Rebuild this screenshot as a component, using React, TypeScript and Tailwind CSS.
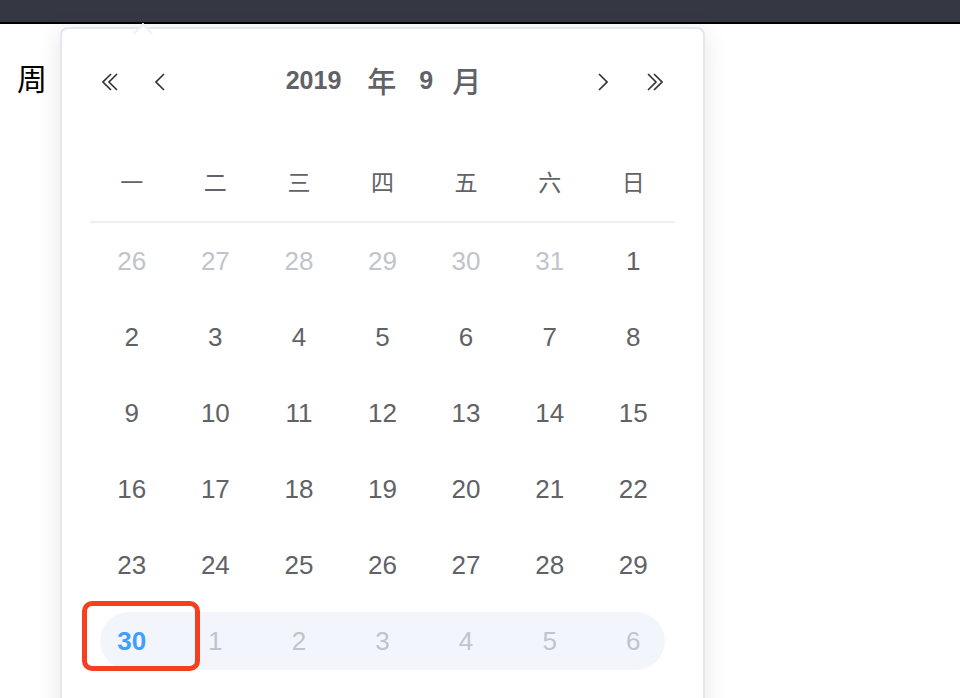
import React from 'react';

const weekdays = ['一', '二', '三', '四', '五', '六', '日'];

type Cell = { n: number; off?: boolean };

const rows: Cell[][] = [
  [{ n: 26, off: true }, { n: 27, off: true }, { n: 28, off: true }, { n: 29, off: true }, { n: 30, off: true }, { n: 31, off: true }, { n: 1 }],
  [{ n: 2 }, { n: 3 }, { n: 4 }, { n: 5 }, { n: 6 }, { n: 7 }, { n: 8 }],
  [{ n: 9 }, { n: 10 }, { n: 11 }, { n: 12 }, { n: 13 }, { n: 14 }, { n: 15 }],
  [{ n: 16 }, { n: 17 }, { n: 18 }, { n: 19 }, { n: 20 }, { n: 21 }, { n: 22 }],
  [{ n: 23 }, { n: 24 }, { n: 25 }, { n: 26 }, { n: 27 }, { n: 28 }, { n: 29 }],
];

const lastWeek = [30, 1, 2, 3, 4, 5, 6];

function Chevron({ dir, double }: { dir: 'left' | 'right'; double?: boolean }) {
  const left = dir === 'left';
  const single = (x: number) =>
    left ? `M${x + 8} 1 L${x} 9 L${x + 8} 17` : `M${x} 1 L${x + 8} 9 L${x} 17`;
  return (
    <svg width={double ? 16 : 10} height="18" viewBox={double ? '0 0 16 18' : '0 0 10 18'} fill="none">
      <path d={single(1)} stroke="#303133" strokeWidth="1.6" strokeLinejoin="miter" />
      {double && <path d={single(7)} stroke="#303133" strokeWidth="1.6" strokeLinejoin="miter" />}
    </svg>
  );
}

export default function App() {
  return (
    <div
      className="relative w-full h-[698px] overflow-hidden bg-white"
      style={{ fontFamily: '"Liberation Sans", "Noto Sans CJK SC", sans-serif' }}
    >
      <div className="h-[24px] bg-[#353743] border-b-2 border-black" />

      <div className="pl-[17px] pt-[40px] text-[30px] leading-[32px] text-black">周</div>

      {/* date picker popover */}
      <div className="absolute left-[60px] top-[27px] w-[645px] h-[720px] bg-white border-2 border-[#e4e7ed] rounded-[8px] shadow-[0_4px_24px_rgba(0,0,0,0.1)] px-[28px] pt-[28px]">
        <div className="absolute -top-[3px] left-[74px] w-[14px] h-[14px] bg-white rotate-45 border-l-2 border-t-2 border-[#eef0f4]" />

        <div className="flex items-center h-[50px]">
          <div className="flex gap-[10px] w-[90px]">
            <button className="w-[40px] h-[40px] flex items-center justify-center"><Chevron dir="left" double /></button>
            <button className="w-[40px] h-[40px] flex items-center justify-center"><Chevron dir="left" /></button>
          </div>
          <div className="flex-1 flex justify-center items-center text-[#606266] font-semibold -mt-[5px] ml-[4px]">
            <span className="text-[25px] leading-[30px]">2019</span>
            <span className="ml-[26px] mt-[6px] text-[29px] leading-[34px] font-medium">年</span>
            <span className="ml-[23px] text-[25px] leading-[30px]">9</span>
            <span className="ml-[19px] mt-[6px] text-[29px] leading-[34px] font-medium">月</span>
          </div>
          <div className="flex gap-[12px] w-[92px]">
            <button className="w-[40px] h-[40px] flex items-center justify-center"><Chevron dir="right" /></button>
            <button className="w-[40px] h-[40px] flex items-center justify-center"><Chevron dir="right" double /></button>
          </div>
        </div>

        <div className="mt-[38px] grid grid-cols-7 h-[78px] items-center border-b-2 border-[#ebeef5] text-[23px] text-[#606266]">
          {weekdays.map((w) => (
            <div key={w} className="text-center">{w}</div>
          ))}
        </div>

        {rows.map((row, i) => (
          <div key={i} className="grid grid-cols-7 h-[76px] items-center text-[26px]">
            {row.map((c, j) => (
              <div key={j} className={`text-center ${c.off ? 'text-[#c0c4cc]' : 'text-[#606266]'}`}>{c.n}</div>
            ))}
          </div>
        ))}

        <div className="grid grid-cols-7 h-[76px] items-center text-[26px]">
          {lastWeek.map((n, j) => {
            const first = j === 0;
            const last = j === 6;
            return (
              <div
                key={j}
                className={`h-[58px] flex items-center justify-center bg-[#f2f6fc] ${first ? 'ml-[10px] pr-[10px] rounded-l-full text-[#409eff] font-semibold' : 'text-[#c0c4cc]'} ${last ? 'mr-[10px] pl-[10px] rounded-r-full' : ''}`}
              >
                {n}
              </div>
            );
          })}
        </div>
      </div>

      {/* annotation box */}
      <div className="absolute left-[82px] top-[601px] w-[118px] h-[70px] border-[5px] border-[#f5401f] rounded-[10px]" />
    </div>
  );
}
